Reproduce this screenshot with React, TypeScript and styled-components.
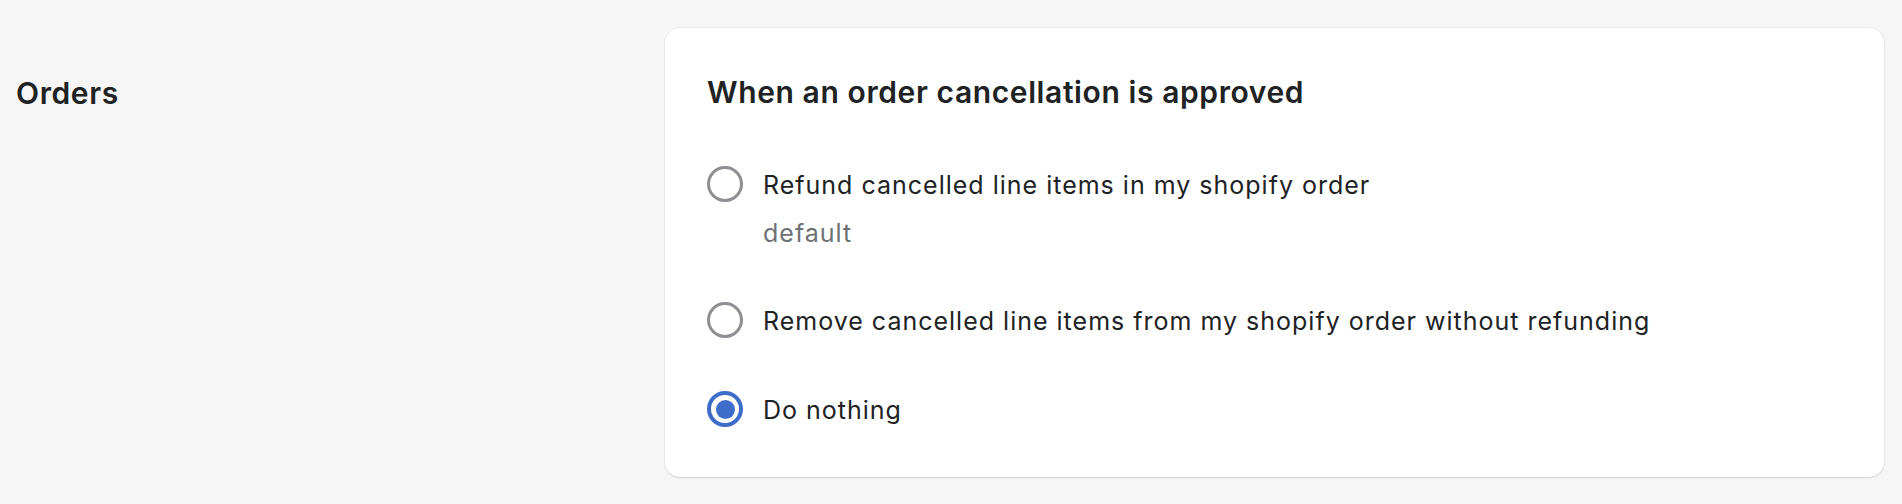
import React, { useState } from "react";
import styled, { createGlobalStyle } from "styled-components";

const GlobalStyle = createGlobalStyle`
  * { box-sizing: border-box; }
  html, body { margin: 0; padding: 0; background: #f6f6f6; }
  body {
    font-family: Inter, "Noto Sans", "Liberation Sans", sans-serif;
    color: #202223;
    -webkit-font-smoothing: antialiased;
  }
`;

const Page = styled.div`
  display: grid;
  grid-template-columns: 649px 1fr;
  padding: 28px 18px 28px 16px;
  min-height: 504px;
  background: #f6f6f6;
`;

const Annotation = styled.div`
  padding-top: 47px;
`;

const SectionTitle = styled.h2`
  margin: 0;
  font-size: 30px;
  line-height: 36px;
  font-weight: 600;
  letter-spacing: 0.6px;
  color: #202223;
`;

const Card = styled.div`
  background: #ffffff;
  border-radius: 15px;
  box-shadow: 0 1px 2px rgba(0, 0, 0, 0.12), 0 0 0 1px rgba(0, 0, 0, 0.03);
  padding: 46px 42px 50px;
`;

const CardTitle = styled.h3`
  margin: 0 0 59px;
  font-size: 30px;
  line-height: 36px;
  font-weight: 600;
  letter-spacing: 0.6px;
  color: #202223;
`;

const OptionList = styled.div`
  display: flex;
  flex-direction: column;
  gap: 56px;
`;

const Option = styled.label`
  display: flex;
  align-items: flex-start;
  gap: 20px;
  cursor: pointer;
`;

const RadioCircle = styled.span<{ $checked: boolean }>`
  flex: none;
  width: 36px;
  height: 36px;
  margin-top: -3px;
  border-radius: 50%;
  border: ${(p) => (p.$checked ? "4px solid #3d6dc8" : "3.5px solid #8e8f93")};
  display: flex;
  align-items: center;
  justify-content: center;
  background: #fff;
  &::after {
    content: "";
    display: ${(p) => (p.$checked ? "block" : "none")};
    width: 19px;
    height: 19px;
    border-radius: 50%;
    background: #3d6dc8;
  }
`;

const OptionText = styled.div`
  display: flex;
  flex-direction: column;
  gap: 16px;
`;

const OptionLabel = styled.span`
  font-size: 25px;
  line-height: 32px;
  font-weight: 400;
  letter-spacing: 1px;
  color: #202223;
`;

const OptionHelp = styled.span`
  font-size: 25px;
  line-height: 32px;
  letter-spacing: 1px;
  color: #6d7175;
`;

const options = [
  { id: "refund", label: "Refund cancelled line items in my shopify order", help: "default" },
  { id: "remove", label: "Remove cancelled line items from my shopify order without refunding" },
  { id: "nothing", label: "Do nothing" },
];

export default function App() {
  const [value, setValue] = useState("nothing");
  return (
    <>
      <GlobalStyle />
      <Page>
        <Annotation>
          <SectionTitle>Orders</SectionTitle>
        </Annotation>
        <Card>
          <CardTitle>When an order cancellation is approved</CardTitle>
          <OptionList>
            {options.map((o) => (
              <Option key={o.id} onClick={() => setValue(o.id)}>
                <RadioCircle $checked={value === o.id} />
                <OptionText>
                  <OptionLabel>{o.label}</OptionLabel>
                  {o.help && <OptionHelp>{o.help}</OptionHelp>}
                </OptionText>
              </Option>
            ))}
          </OptionList>
        </Card>
      </Page>
    </>
  );
}
